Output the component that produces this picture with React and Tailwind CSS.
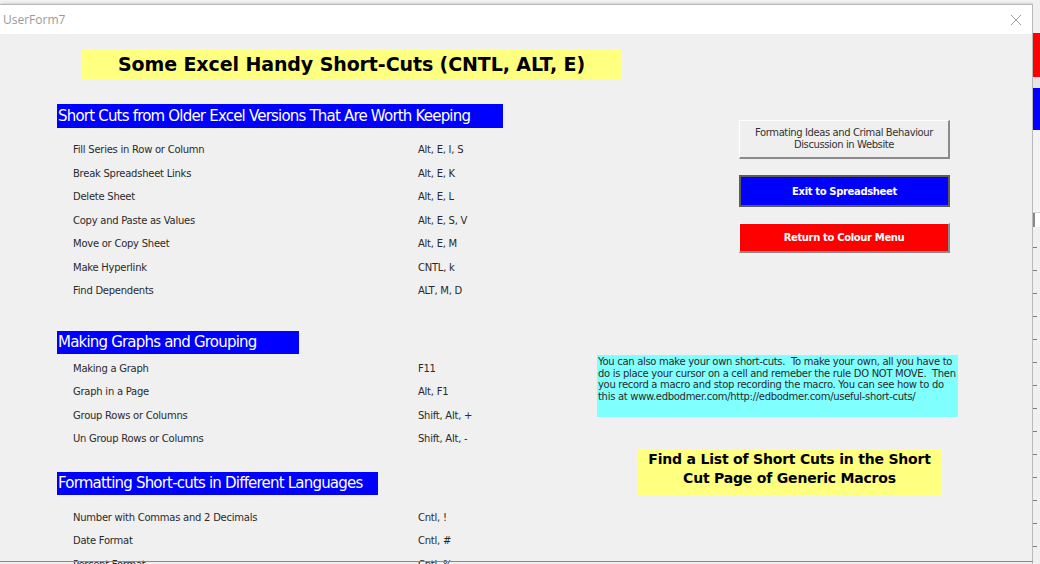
import React from "react";

const F = { fontFamily: '"DejaVu Sans", Tahoma, sans-serif' };

const sec1 = [
  ["Fill Series in Row or Column", "Alt, E, I, S"],
  ["Break Spreadsheet Links", "Alt, E, K"],
  ["Delete Sheet", "Alt, E, L"],
  ["Copy and Paste as Values", "Alt, E, S, V"],
  ["Move or Copy Sheet", "Alt, E, M"],
  ["Make Hyperlink", "CNTL, k"],
  ["Find Dependents", "ALT, M, D"],
];
const sec2 = [
  ["Making a Graph", "F11"],
  ["Graph in a Page", "Alt, F1"],
  ["Group Rows or Columns", "Shift, Alt, +"],
  ["Un Group Rows or Columns", "Shift, Alt, -"],
];
const sec3 = [
  ["Number with Commas and 2 Decimals", "Cntl, !"],
  ["Date Format", "Cntl, #"],
  ["Percent Format", "Cntl, %"],
];

function Rows({ items }) {
  return (
    <div className="flex flex-col">
      {items.map(([a, b]) => (
        <div key={a} className="flex h-[23.5px] shrink-0 items-center text-[10px] tracking-[-0.25px] text-[#2a2a2a]">
          <div className="w-[361px] pl-[16px]">{a}</div>
          <div>{b}</div>
        </div>
      ))}
    </div>
  );
}

function Header({ children, w, h }) {
  return (
    <div className={`${h} ${w} flex items-center whitespace-nowrap bg-[#0000ff] pl-[1px] text-[15px] tracking-[-0.8px] text-white`}>
      {children}
    </div>
  );
}

export default function App() {
  return (
    <div className="relative flex h-[564px] w-[1040px] overflow-hidden bg-[#f3f3f3]" style={F}>
      <div className="mt-[4px] flex w-[1033px] flex-col overflow-hidden border-r border-t border-[#b9b9b9] shadow-[1px_0_3px_rgba(0,0,0,0.25)]">
        <div className="flex h-[29px] shrink-0 items-center justify-between bg-white pl-[3px] pr-[10px]">
          <span className="text-[12px] text-[#9a9a9a]" style={{ fontFamily: '"Open Sans", "Noto Sans", sans-serif' }}>UserForm7</span>
          <svg width="12" height="12" viewBox="0 0 12 12" className="text-[#a0a0a0]">
            <path d="M1 1L11 11M11 1L1 11" stroke="currentColor" strokeWidth="1" />
          </svg>
        </div>
        <div className="flex flex-1 flex-col bg-[#f0f0f0]">
          <div className="ml-[82px] mt-[15px] flex h-[31px] w-[539px] shrink-0 items-center justify-center bg-[#ffff80] text-[19px] font-bold tracking-[-0.1px] text-black">
            Some Excel Handy Short-Cuts (CNTL, ALT, E)
          </div>
          <div className="mt-[24px] flex">
            <div className="ml-[57px] flex w-[540px] flex-col">
              <Header w="w-[446px]" h="h-[24px]">Short Cuts from Older Excel Versions That Are Worth Keeping</Header>
              <div className="mt-[10px]"><Rows items={sec1} /></div>
              <div className="mt-[28px]"><Header w="w-[242px]" h="h-[23px]">Making Graphs and Grouping</Header></div>
              <div className="mt-[3px]"><Rows items={sec2} /></div>
              <div className="mt-[21px]"><Header w="w-[321px]" h="h-[23px]">Formatting Short-cuts in Different Languages</Header></div>
              <div className="mt-[11px]"><Rows items={sec3} /></div>
            </div>
            <div className="flex flex-col">
              <div className="ml-[142px] mt-[16px] flex h-[39px] w-[211px] flex-col items-center justify-center border-b-2 border-l border-r-2 border-t border-b-[#8a8a8a] border-l-white border-r-[#8a8a8a] border-t-white bg-[#efefef] text-[10px] leading-[12px] tracking-[-0.4px] text-[#333]">
                <span>Formating Ideas and Crimal Behaviour</span>
                <span>Discussion in Website</span>
              </div>
              <div className="ml-[142px] mt-[16px] flex h-[32px] w-[211px] items-center justify-center border-2 border-[#5c5c5c] bg-[#0000ff] text-[10px] font-bold tracking-[-0.35px] text-white">
                Exit to Spreadsheet
              </div>
              <div className="ml-[142px] mt-[16px] flex h-[30px] w-[211px] items-center justify-center border-b-2 border-l border-r-2 border-t border-b-[#8a8a8a] border-l-white border-r-[#8a8a8a] border-t-white bg-[#ff0000] text-[10px] font-bold tracking-[-0.35px] text-white">
                Return to Colour Menu
              </div>
              <div className="mt-[102px] h-[62px] w-[361px] whitespace-pre bg-[#80ffff] pl-[1px] pt-[1px] text-[10px] leading-[11.5px] tracking-[-0.3px] text-[#2a2a2a]">
                {"You can also make your own short-cuts.  To make your own, all you have to\ndo is place your cursor on a cell and remeber the rule DO NOT MOVE.  Then\nyou record a macro and stop recording the macro. You can see how to do\nthis at www.edbodmer.com/http://edbodmer.com/useful-short-cuts/"}
              </div>
              <div className="ml-[40px] mt-[32px] flex h-[47px] w-[305px] flex-col items-center bg-[#ffff80] pt-[1px] text-[14px] font-bold leading-[19px] tracking-[-0.2px] text-black">
                <span>Find a List of Short Cuts in the Short</span>
                <span>Cut Page of Generic Macros</span>
              </div>
            </div>
          </div>
        </div>
      </div>
      <div className="flex w-[7px] flex-col bg-[#f0f0f0]">
        <div className="h-[33px] shrink-0" />
        <div className="h-[44px] shrink-0 bg-[#ff0000]" />
        <div className="h-[11px] shrink-0 bg-[#e6e6e6]" />
        <div className="h-[42px] shrink-0 bg-[#0000ff]" />
        <div className="h-[83px] shrink-0 border-b border-[#d0d0d0] bg-[#f3f3f3]" />
        <div className="h-[14px] shrink-0 border-l-2 border-[#888] bg-white" />
        <div className="flex flex-1 flex-col gap-[22px] pt-[20px]">
          {Array.from({ length: 16 }).map((_, i) => (
            <div key={i} className="h-[1px] w-[4px] shrink-0 bg-[#7a7a7a]" />
          ))}
        </div>
      </div>
      <div className="absolute bottom-[2px] left-0 h-[1px] w-[1033px] bg-[#8a8a8a]" />
    </div>
  );
}
